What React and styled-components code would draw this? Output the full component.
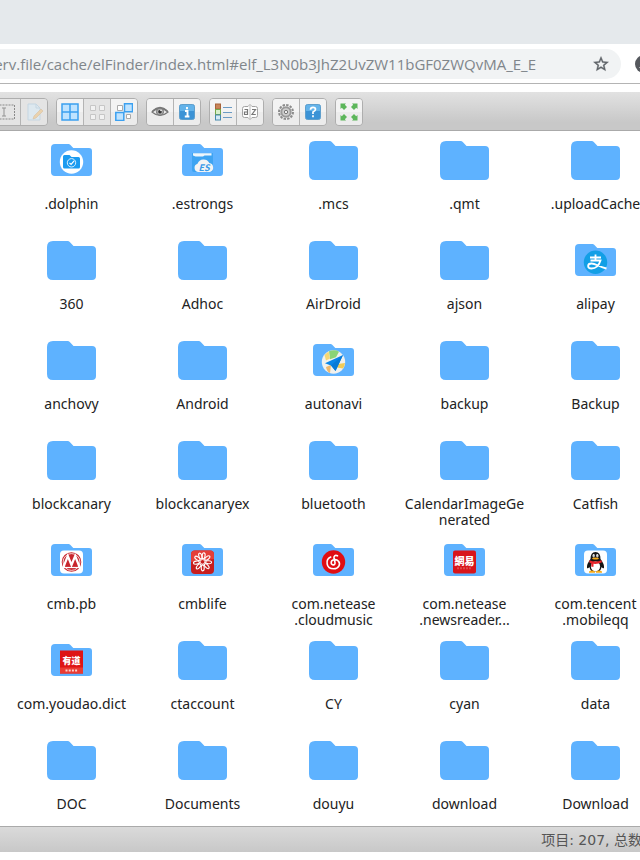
import React from 'react'
import styled, { createGlobalStyle } from 'styled-components'

const URL_TEXT = 'erv.file/cache/elFinder/index.html#elf_L3N0b3JhZ2UvZW11bGF0ZWQvMA_E_E'

const files = [
  { name: '.dolphin', badge: 'dolphin' },
  { name: '.estrongs', badge: 'estrongs' },
  { name: '.mcs' },
  { name: '.qmt' },
  { name: '.uploadCache' },
  { name: '360' },
  { name: 'Adhoc' },
  { name: 'AirDroid' },
  { name: 'ajson' },
  { name: 'alipay', badge: 'alipay' },
  { name: 'anchovy' },
  { name: 'Android' },
  { name: 'autonavi', badge: 'autonavi' },
  { name: 'backup' },
  { name: 'Backup' },
  { name: 'blockcanary' },
  { name: 'blockcanaryex' },
  { name: 'bluetooth' },
  { name: 'CalendarImageGe\nnerated' },
  { name: 'Catfish' },
  { name: 'cmb.pb', badge: 'cmb' },
  { name: 'cmblife', badge: 'cmblife' },
  { name: 'com.netease\n.cloudmusic', badge: 'music' },
  { name: 'com.netease\n.newsreader...', badge: 'news' },
  { name: 'com.tencent\n.mobileqq', badge: 'qq' },
  { name: 'com.youdao.dict', badge: 'youdao' },
  { name: 'ctaccount' },
  { name: 'CY' },
  { name: 'cyan' },
  { name: 'data' },
  { name: 'DOC' },
  { name: 'Documents' },
  { name: 'douyu' },
  { name: 'download' },
  { name: 'Download' },
]

const badges = {
  dolphin: (
    <g>
      <circle cx="20.5" cy="18" r="11.7" fill="#fff" />
      <path d="M12 12.5q0-1.5 1.5-1.5h5l2 2h7q1.5 0 1.5 1.5v8.5q0 1.5-1.5 1.5h-14q-1.5 0-1.5-1.5z" fill="#1b9bf0" />
      <circle cx="20.5" cy="18.8" r="4.2" fill="none" stroke="#d9f0ff" strokeWidth="1" />
      <path d="M18.5 18.8l1.6 1.6 3-3.6" fill="none" stroke="#fff" strokeWidth="1.2" />
    </g>
  ),
  estrongs: (
    <g>
      <path d="M10 9h21v17q0 2-2 2H12q-2 0-2-2z" fill="#3ea4f2" />
      <path d="M11 9.2h18.5v2.3h-7l-1.500 1h-7.500l-2.500-1z" fill="#eef6fc" />
      <path d="M16 28a4.3 4.3 0 0 1-.5-8.3 6.500 6.500 0 0 1 11.800-.6 4.600 4.600 0 0 1 .7 8.900z" fill="#f4f4f4" />
      <text x="22" y="27" textAnchor="middle" fontSize="9" fontWeight="700" fontStyle="italic" fill="#3a9ae8">ES</text>
    </g>
  ),
  alipay: (
    <g>
      <circle cx="20.5" cy="18.3" r="11.7" fill="#129fe6" />
      <path d="M15 13.500h11M20.500 10.500v6M15.500 16.500h10c-1.500 5-5 8-9 8-4.500 0-4.500-5 0-5 4 0 8 3.500 15 5" fill="none" stroke="#fff" strokeWidth="1.8" />
    </g>
  ),
  autonavi: (
    <g>
      <circle cx="20.5" cy="18" r="11.7" fill="#f1f1ee" />
      <path d="M16 7.200q6-2 10 .5l-3 5.500-6 2z" fill="#8bd475" />
      <path d="M11.500 11l4-3.500 1.500 7-4 2z" fill="#f5d775" />
      <path d="M13 23l5-2-1 8q-3-1-4-6z" fill="#f0b86c" />
      <path d="M25 20l7-1q-.5 4-2 5.500l-6-1z" fill="#f2cb56" />
      <path d="M30 11L12 19.200l6 2.300 4.500 5.500z" fill="#0b86e8" />
      <path d="M30 11L18 21.500l4.500 5.500z" fill="#087ad6" />
    </g>
  ),
  cmb: (
    <g>
      <rect x="9" y="6.5" width="23" height="23" rx="4" fill="#fff" />
      <circle cx="20.5" cy="18" r="9.8" fill="#c8252c" />
      <circle cx="20.5" cy="18" r="8.4" fill="none" stroke="#fff" strokeWidth=".8" />
      <path d="M12.500 23L16.800 12l3.700 9 3.700-9L28.500 23" fill="none" stroke="#fff" strokeWidth="2.2" />
      <path d="M10 23.500h21" stroke="#fff" strokeWidth="1.2" />
    </g>
  ),
  cmblife: (
    <g>
      <rect x="9" y="6.5" width="23" height="23.5" rx="4" fill="#c81e1e" />
      <path d="M9 18v-7.500q0-4 4-4h15q4 0 4 4V15q-11 1-23 3z" fill="#e53e38" />
      {[10, 52, 94, 136, 178, 220, 262, 304, 340].map((angle) => (
        <ellipse key={angle} cx="20.5" cy="11.7" rx="1.5" ry="3" fill="none" stroke="#fff" strokeWidth="1.1" transform={`rotate(${angle} 20.5 17.8)`} />
      ))}
      <circle cx="20.5" cy="17.8" r="2.3" fill="none" stroke="#fff" strokeWidth=".8" />
    </g>
  ),
  music: (
    <g>
      <circle cx="20.5" cy="18" r="11.7" fill="#e00d12" />
      <path d="M24.500 11.800c-2.400-1.200-4 .3-3.500 2.500l1 4.200c.6 2.800-3.600 3.300-3.800.4-.2-3.500 5-4.300 7.300-1.600 2.300 2.900.3 7.500-4.800 7.500-8 0-8.500-9.500-3-11.800" fill="none" stroke="#fff" strokeWidth="1.6" strokeLinecap="round" />
    </g>
  ),
  news: (
    <g>
      <rect x="9" y="6.5" width="23" height="23" rx="2" fill="#d8151b" />
      <text x="20.5" y="20.5" textAnchor="middle" fontSize="10" fontWeight="900" fill="#fff">網易</text>
      <path d="M14 23.200v2M17 23.200v2M20 23.200v2M23 23.200v2M26 23.200v2" stroke="#e05a5a" strokeWidth="1.5" />
    </g>
  ),
  qq: (
    <g>
      <rect x="9" y="6.5" width="23" height="23" rx="4" fill="#fff" />
      <path d="M15.500 15q0-7 5-7t5 7q4 5 3.500 9-1 1-2.300-1-1 3.500-2.700 4.500H17q-1.700-1-2.700-4.500-1.300 2-2.300 1-.5-4 3.500-9z" fill="#151515" />
      <ellipse cx="20.5" cy="22.5" rx="4.6" ry="5" fill="#fff" />
      <ellipse cx="18.7" cy="11.7" rx="1.2" ry="1.7" fill="#fff" />
      <ellipse cx="22.3" cy="11.7" rx="1.2" ry="1.7" fill="#fff" />
      <circle cx="19" cy="12" r=".5" fill="#111" />
      <circle cx="22" cy="12" r=".5" fill="#111" />
      <ellipse cx="20.5" cy="14.6" rx="3.3" ry="1" fill="#f8ab15" />
      <path d="M14.600 16.300q6 2.500 11.800 0l.5 2q-4 2-8.400 1.500v3h-2.200v-3.300l-2.200-1.200z" fill="#e8232a" />
      <path d="M14 27.500q3-2 6 0v1.200h-6zM21 27.500q3-2 6 0v1.200h-6z" fill="#f8ab15" />
    </g>
  ),
  youdao: (
    <g>
      <rect x="9" y="6.5" width="23" height="23" fill="#de1414" />
      <rect x="9" y="23.5" width="23" height="6" fill="#ea3b32" />
      <text x="20.5" y="19.5" textAnchor="middle" fontSize="9" fontWeight="900" fill="#fff">有道</text>
      <path d="M14.500 26.500h12.500" stroke="#ffd0cc" strokeWidth="2" strokeDasharray="2 1.2" />
    </g>
  ),
}

function Folder({ badge }) {
  if (badge) {
    return (
      <BadgeSvg viewBox="0 0 41 32" width="41" height="32" aria-hidden="true">
        <path d="M4 0H17.500q1 0 1.700.8L22.300 4H38q3 0 3 3v22q0 3-3 3H4q-4 0-4-4V4q0-4 4-4z" fill="#5eb2ff" />
        {badges[badge]}
      </BadgeSvg>
    )
  }
  return (
    <svg viewBox="0 0 49 39" width="49" height="39" aria-hidden="true">
      <path d="M6 0H20.500q1.500 0 2.500 1.200L26.500 5H45q4 0 4 4v26q0 4-4 4H6Q0 39 0 33V6Q0 0 6 0z" fill="#5eb2ff" />
    </svg>
  )
}

const Glyph = ({ children }) => (
  <svg viewBox="0 0 18 18" width="18" height="18" fill="none" aria-hidden="true">{children}</svg>
)

const BlueTile = ({ children }) => (
  <>
    <rect x="1.5" y="1.5" width="15" height="15" rx="2" fill="#3c93d6" stroke="#5f9fcc" />
    <path d="M2 3.500Q2 2 3.500 2h11Q16 2 16 3.500V8H2z" fill="#63b3ea" />
    {children}
  </>
)

const ExpandArrow = ({ angle }) => (
  <path d="M.5.500h5.500L4.800 1.800 7 4 4 7 1.800 4.800.5 6z" fill="#5cb65a" transform={`rotate(${angle} 9 9)`} />
)

const toolGroups = [
  [
    { label: 'Rename', dim: true, icon: <><rect x="1.5" y="2" width="15" height="14" stroke="#333" strokeDasharray="2 1" /><path d="M4 5h4M6 5v8M4 13h4" stroke="#444" /></> },
    { label: 'Edit', dim: true, icon: <><path d="M3 1h8l4 4v12H3z" fill="#d5ebfa" stroke="#a5c8df" /><path d="M11 1v4h4" stroke="#a5c8df" /><path d="M8 16l1-3 7-7 2 2-7 7z" fill="#efc079" stroke="#c99c5e" strokeWidth=".6" /></> },
  ],
  [
    { label: 'Select all', icon: <path d="M1 1h16v16H1zM9 1v16M1 9h16" fill="#bfe3ff" stroke="#3ba0f0" strokeWidth="1.5" /> },
    { label: 'Select none', dim: true, icon: <path d="M2.500 2.500h5v5h-5zM11.500 2.500h5v5h-5zM2.500 11.500h5v5h-5zM11.500 11.500h5v5h-5z" fill="#fff" stroke="#a8a8a8" /> },
    { label: 'Invert selection', icon: <><path d="M2.500 2.500h5v5h-5zM11.500 11.500h4v4h-4z" fill="#fff" stroke="#aaa" /><path d="M9.500.800h8v8h-8zM.8 9.500h8v8h-8z" fill="#bfe3ff" stroke="#3ba0f0" strokeWidth="1.5" /></> },
  ],
  [
    { label: 'Preview', icon: <><path d="M1 9Q9 1.500 17 9 9 16 1 9z" fill="#eee" stroke="#777" strokeWidth="1.2" /><path d="M1.500 8Q9 1 16.500 8" stroke="#777" strokeWidth="1.3" /><circle cx="9" cy="8.7" r="3.6" fill="#aaa" stroke="#777" /><circle cx="9" cy="8.7" r="1.8" fill="#333" /><circle cx="10" cy="7.5" r=".8" fill="#fff" /></> },
    { label: 'Get info', icon: <BlueTile><path d="M9 4v2.200M7 8h2.500v5M6.800 13.500h4.600" stroke="#fff" strokeWidth="1.9" /></BlueTile> },
  ],
  [
    { label: 'View', icon: <><rect x="1.5" y="1" width="5" height="5" fill="#c98558" stroke="#a76239" /><rect x="1.5" y="6.5" width="5" height="5" fill="#d8efcb" stroke="#74a84a" /><rect x="1.5" y="12" width="5" height="5" fill="#d4e9f5" stroke="#4789ac" /><path d="M9 4.500h9M9 9.500h9M9 14.500h9" stroke="#6b9bc4" strokeWidth="1.2" /></> },
    { label: 'Sort', icon: <><path d="M3.500 3.500h3.500L9 1.500l2 2h3.500q2 0 2 2v7q0 2-2 2H11L9 16.500l-2-2H3.500q-2 0-2-2v-7q0-2 2-2z" fill="#fdfdfd" stroke="#a3a3a3" /><path d="M9 3v12" stroke="#bbb" /><path d="M3.500 6.500h3v5h-3v-2.500H6M11 6.500h3.500l-3.500 5h3.800" stroke="#777" strokeWidth="1.2" /></> },
  ],
  [
    { label: 'Preferences', icon: <><circle cx="9" cy="9" r="7" stroke="#8b8b8b" strokeWidth="2" strokeDasharray="2.4 1.26" /><circle cx="9" cy="9" r="4.7" fill="#cfcfcf" stroke="#999" strokeWidth="2" /><circle cx="9" cy="9" r="1.7" fill="#eee" stroke="#777" /></> },
    { label: 'Help', icon: <BlueTile><path d="M6.500 6.800q0-2.500 2.500-2.500t2.500 2Q11.500 8 9 9v2M9 12.200v2" stroke="#fff" strokeWidth="1.7" /></BlueTile> },
  ],
  [
    { label: 'Full screen', icon: <>{[0, 90, 180, 270].map((a) => <ExpandArrow key={a} angle={a} />)}</> },
  ],
]

export default function App() {
  return (
    <>
      <Global />
      <Shell>
        <TabStrip />
        <BrowserBar>
          <AddressBar>
            <Address type="text" aria-label="Address" defaultValue={URL_TEXT} />
            <StarButton type="button" aria-label="Bookmark this page">
              <svg viewBox="0 0 24 24" width="18" height="18" fill="#5f6368" stroke="#5f6368" strokeWidth=".5" aria-hidden="true">
                <path d="M22 9.240l-7.190-.62L12 2 9.190 8.630 2 9.240l5.460 4.730L5.820 21 12 17.270 18.180 21l-1.630-7.030L22 9.240zM12 15.400l-3.760 2.270 1-4.280-3.320-2.880 4.380-.38L12 6.100l1.710 4.040 4.380.38-3.320 2.880 1 4.280L12 15.400z" />
              </svg>
            </StarButton>
          </AddressBar>
          <ProfileButton type="button" aria-label="Profile">
            <svg viewBox="0 0 18 18" width="18" height="18" aria-hidden="true">
              <circle cx="9" cy="9" r="9" fill="#55585d" />
              <path d="M4 13q5-5 10 0z" fill="#fff" />
              <circle cx="9" cy="6.5" r="2.5" fill="#fff" />
            </svg>
          </ProfileButton>
        </BrowserBar>
        <Toolbar role="toolbar">
          {toolGroups.map((group) => (
            <ToolGroup key={group[0].label}>
              {group.map((tool) => (
                <ToolButton key={tool.label} type="button" title={tool.label} aria-label={tool.label} $dim={tool.dim}>
                  <Glyph>{tool.icon}</Glyph>
                </ToolButton>
              ))}
            </ToolGroup>
          ))}
        </Toolbar>
        <FileGrid>
          {files.map((file) => (
            <FileItem key={file.name}>
              <IconBox>
                <Folder badge={file.badge} />
              </IconBox>
              <FileName>{file.name}</FileName>
            </FileItem>
          ))}
        </FileGrid>
        <StatusBar>项目: 207, 总数</StatusBar>
      </Shell>
    </>
  )
}

const Global = createGlobalStyle`
  * {
    box-sizing: border-box;
  }
  body {
    margin: 0;
    background: #fff;
    overflow: hidden;
    font-family: "Noto Sans", "Noto Sans CJK SC", sans-serif;
  }
  button {
    padding: 0;
    border: 0;
    background: none;
    cursor: pointer;
  }
  svg {
    display: block;
  }
`

const Shell = styled.div`
  display: flex;
  flex-direction: column;
  width: calc(100% + 24px);
  height: 100vh;
  padding-bottom: 8px;
`

const TabStrip = styled.div`
  flex: none;
  height: 44px;
  background: #e5e9ec;
`

const BrowserBar = styled.div`
  display: flex;
  flex: none;
  align-items: center;
  gap: 14px;
  height: 40px;
  margin: 0 0 8px -60px;
  padding-right: 11px;
  border-bottom: 1px solid #b4b4b4;
`

const AddressBar = styled.div`
  display: flex;
  flex: 1;
  align-items: center;
  height: 30px;
  padding-right: 11px;
  border-radius: 15px;
  background: #f1f3f4;
`

const Address = styled.input`
  flex: 1;
  min-width: 0;
  margin-right: 56px;
  padding: 0;
  border: 0;
  outline: 0;
  background: none;
  color: #80868b;
  font: 15px/20px "Open Sans", sans-serif;
  text-align: right;
`

const StarButton = styled.button`
  flex: none;
`

const ProfileButton = styled.button`
  flex: none;
`

const Toolbar = styled.div`
  display: flex;
  flex: none;
  gap: 8px;
  margin-left: -7px;
  padding: 6px 0 4px;
  border-bottom: 1px solid #aaa;
  background: linear-gradient(#e2e2e2, #c8c8c8 80%);
`

const ToolGroup = styled.div`
  display: flex;
  border: 1px solid #aeaeae;
  border-radius: 4px;
  overflow: hidden;
`

const ToolButton = styled.button`
  display: flex;
  align-items: center;
  justify-content: center;
  width: 26px;
  height: 26px;
  background: ${({ $dim }) => ($dim ? '#e4e4e4' : 'linear-gradient(#f3f3f3 50%, #ececec 50%)')};

  & + & {
    width: 27px;
    border-left: 1px solid #b4b4b4;
  }
  svg {
    opacity: ${({ $dim }) => ($dim ? 0.5 : 1)};
  }
`

const FileGrid = styled.ul`
  display: grid;
  flex: 1;
  min-height: 0;
  grid-template-columns: repeat(5, 131px);
  grid-auto-rows: 92px;
  row-gap: 8px;
  align-content: start;
  margin: 0;
  padding: 5px 0 0 6px;
  overflow: hidden;
  list-style: none;
`

const FileItem = styled.li`
  display: flex;
  flex-direction: column;
  align-items: center;
  gap: 12px;
`

const IconBox = styled.div`
  display: flex;
  flex: none;
  align-items: center;
  justify-content: center;
  height: 48px;
`

const BadgeSvg = styled.svg`
  font-family: "Noto Sans CJK SC", sans-serif;
`

const FileName = styled.span`
  color: #222;
  font-size: 14px;
  line-height: 16px;
  text-align: center;
  white-space: pre-line;
`

const StatusBar = styled.footer`
  flex: none;
  height: 26px;
  padding-right: 22px;
  border-top: 1px solid #aaa;
  background: linear-gradient(#dadada, #c8c8c8);
  color: #555;
  font: 14px/26px "DejaVu Sans", "Noto Sans CJK SC", sans-serif;
  text-align: right;
`
